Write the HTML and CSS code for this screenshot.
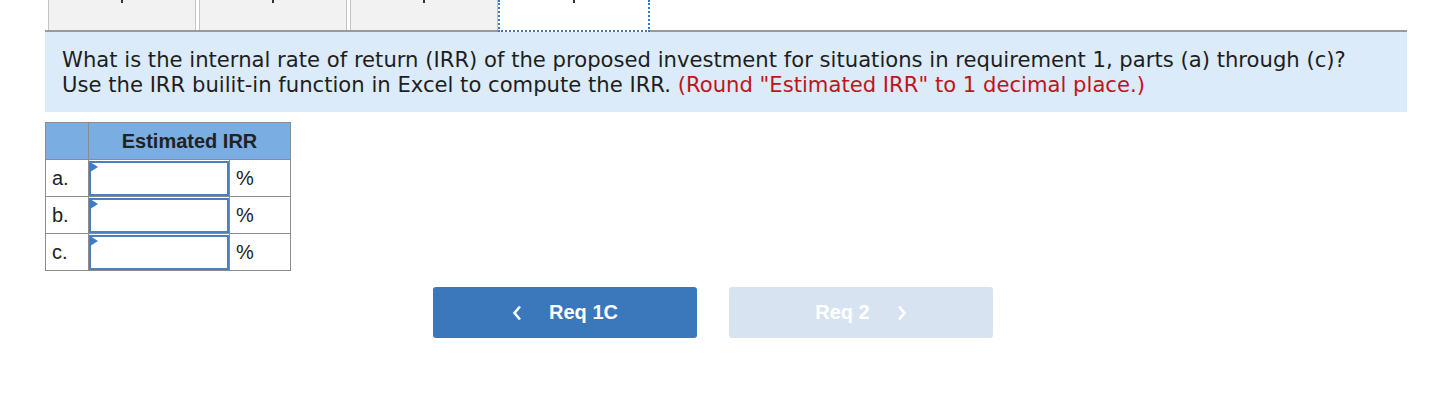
FILE: index.html
```html
<!DOCTYPE html>
<html>
<head>
<meta charset="utf-8">
<link rel="stylesheet" href="styles.css">
</head>
<body>
<div class="page">
  <div class="tabs">
    <div class="tab"><span class="tick"></span></div>
    <div class="tab"><span class="tick"></span></div>
    <div class="tab"><span class="tick"></span></div>
    <div class="tab active"><span class="tick"></span></div>
  </div>
  <div class="question">
    <p>What is the internal rate of return (IRR) of the proposed investment for situations in requirement 1, parts (a) through (c)?<br>Use the IRR builit-in function in Excel to compute the IRR. <span class="red">(Round "Estimated IRR" to 1 decimal place.)</span></p>
  </div>
  <table class="irr">
    <thead>
      <tr><th class="blank"></th><th colspan="2">Estimated IRR</th></tr>
    </thead>
    <tbody>
      <tr><td class="lbl">a.</td><td class="inp"><div class="box"><span class="flag"></span></div></td><td class="pct">%</td></tr>
      <tr><td class="lbl">b.</td><td class="inp"><div class="box"><span class="flag"></span></div></td><td class="pct">%</td></tr>
      <tr><td class="lbl">c.</td><td class="inp"><div class="box"><span class="flag"></span></div></td><td class="pct">%</td></tr>
    </tbody>
  </table>
  <div class="nav">
    <button class="btn prev"><svg width="10" height="16" viewBox="0 0 10 16"><path d="M8 1.5 L2.5 8 L8 14.5" fill="none" stroke="#fff" stroke-width="2.6"/></svg><span>Req 1C</span></button>
    <button class="btn next"><span>Req 2</span><svg width="10" height="16" viewBox="0 0 10 16"><path d="M2 1.5 L7.5 8 L2 14.5" fill="none" stroke="#fff" stroke-width="2.6"/></svg></button>
  </div>
</div>
</body>
</html>
```
FILE: styles.css
```css
html, body { margin: 0; padding: 0; background: #fff; }
body { font-family: "Liberation Sans", Arial, sans-serif; color: #222; }
.page { padding-left: 45px; width: 1362px; }
.tabs { display: flex; gap: 3px; padding-left: 3px; height: 30px; }
.tab {
  width: 148px; height: 30px; box-sizing: border-box;
  background: #f2f2f2; border-left: 1px solid #c4c4c4; border-right: 1px solid #c4c4c4;
  display: flex; justify-content: center; position: relative;
}
.tab.active {
  background: #fff; width: 152px; height: 32px; margin-left: -3px;
  border: 2px dotted #3b78c2; border-top: none; z-index: 2;
}
.tick { width: 2px; height: 3px; background: #333; }
.question {
  background: #dbebf9; border-top: 2px solid #9a9a9a;
  height: 82px; box-sizing: border-box; padding: 15px 17px 0;
}
.question p {
  margin: 0; font-family: "DejaVu Sans", Verdana, sans-serif;
  font-size: 21.15px; line-height: 25px; color: #1e1e1e;
}
.red { color: #c0141c; }
.irr { border-collapse: collapse; margin-top: 10px; font-size: 20px; }
.irr th, .irr td { border: 1px solid #8c8c8c; padding: 0; }
.irr th { background: #7aaee3; height: 36px; font-weight: bold; font-size: 20px; color: #222; }
.irr th.blank { width: 42px; }
.irr td { height: 36px; }
.lbl { padding-left: 6px !important; width: 36px; }
.inp { width: 140px; }
.box {
  position: relative; height: 35px; box-sizing: border-box;
  border: 2px solid #4a80c2; background: #fff; margin: 0 0 0 0;
}
.flag {
  position: absolute; left: -1px; top: -1px; width: 0; height: 0;
  border-top: 5px solid transparent; border-bottom: 5px solid transparent;
  border-left: 8px solid #3d7cc9;
}
.pct { width: 54px; padding-left: 6px !important; }
.nav { display: flex; gap: 32px; margin-top: 16px; padding-left: 388px; }
.btn {
  width: 264px; height: 51px; border: none; border-radius: 3px; padding: 0;
  font-family: "Liberation Sans", Arial, sans-serif; font-weight: bold; font-size: 20px;
  color: #fff; display: flex; align-items: center; justify-content: center; gap: 27px;
}
.prev { background: #3a77bb; }
.next { background: #d7e3f0; }
```
